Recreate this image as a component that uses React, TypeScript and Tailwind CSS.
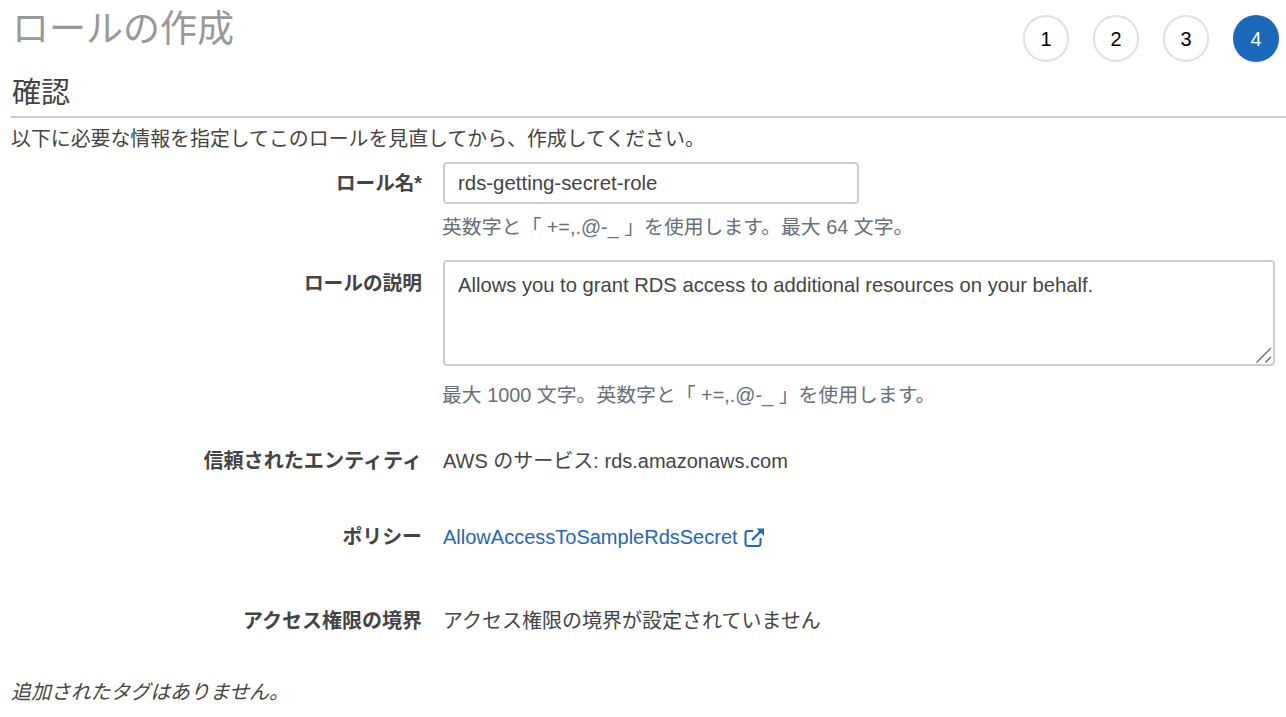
const FONT = "font-['Liberation_Sans','Noto_Sans_CJK_JP',sans-serif]";

const STEPS = [1, 2, 3, 4];

function Label({ children }: { children: React.ReactNode }) {
  return <div className="w-[422px] shrink-0 text-right font-bold text-[#444]">{children}</div>;
}

function ExternalIcon() {
  return (
    <svg width="21" height="20" viewBox="0 0 21 20" fill="none" className="shrink-0">
      <path d="M9 4H4a2.5 2.5 0 0 0-2.5 2.5v10A2.5 2.5 0 0 0 4 19h10a2.5 2.5 0 0 0 2.5-2.5V11" stroke="#1a69bb" strokeWidth="2" />
      <path d="M8 13l9-9" stroke="#1a69bb" strokeWidth="2.4" />
      <path d="M12.5 1.5H20V9z" fill="#1a69bb" />
    </svg>
  );
}

export default function App() {
  return (
    <div className={`${FONT} h-[717px] overflow-hidden bg-white pl-3 text-[19.9px] leading-[28px] text-[#444]`}>
      <div className="flex items-start justify-between pr-[7px]">
        <h1 className="mt-[9px] text-[37px] leading-[42px] text-[#999]">ロールの作成</h1>
        <div className="mt-[15px] flex gap-6">
          {STEPS.map((n) => (
            <div
              key={n}
              className={
                n === 4
                  ? "flex h-[47px] w-[46px] items-center justify-center rounded-full bg-[#1a69bb] text-white"
                  : "flex h-[47px] w-[46px] items-center justify-center rounded-full border-2 border-[#e1e1e1] text-black"
              }
            >
              {n}
            </div>
          ))}
        </div>
      </div>
      <h2 className="-ml-px mt-[13px] border-b-2 border-[#ccc] pb-[5px] pl-px text-[29px] leading-[36px] text-[#444]">確認</h2>
      <p className="-ml-px mt-[7px]">以下に必要な情報を指定してこのロールを見直してから、作成してください。</p>
      <div className="-ml-3 mt-[9px] flex flex-col">
        <div className="flex gap-[21px]">
          <div className="pt-[7px] text-[19.6px]">
            <Label>ロール名*</Label>
          </div>
          <div>
            <input
              readOnly
              value="rds-getting-secret-role"
              className="block h-[42px] w-[416px] rounded border-2 border-[#ccc] px-[13px] text-[20.4px] text-[#444] outline-none"
            />
            <p className="-ml-px mt-[9px] text-[19.85px] text-[#687078]">英数字と「 +=,.@-_ 」を使用します。最大 64 文字。</p>
          </div>
        </div>
        <div className="mt-[19px] flex gap-[21px]">
          <div className="pt-[9px] text-[19.7px]">
            <Label>ロールの説明</Label>
          </div>
          <div>
            <div className="relative">
              <textarea
                readOnly
                value="Allows you to grant RDS access to additional resources on your behalf."
                className="block h-[106px] w-[832px] resize-none rounded border-2 border-[#ccc] px-[13px] py-[9px] text-[20.2px] text-[#444] outline-none"
              />
              <svg width="16" height="16" viewBox="0 0 16 16" fill="none" className="absolute bottom-[3px] right-[3px]">
                <path d="M.5 15.5L15 1M9.5 15.5L15 9.8" stroke="#666" strokeWidth="1.3" />
              </svg>
            </div>
            <p className="-ml-px mt-[15px] text-[19.85px] text-[#687078]">最大 1000 文字。英数字と「 +=,.@-_ 」を使用します。</p>
          </div>
        </div>
        <div className="mt-[38px] flex gap-[21px]">
          <div className="text-[20.1px]">
            <Label>信頼されたエンティティ</Label>
          </div>
          <div className="text-[20px]">AWS のサービス: rds.amazonaws.com</div>
        </div>
        <div className="mt-[48px] flex gap-[21px]">
          <Label>ポリシー</Label>
          <a className="flex items-center gap-[6px] text-[20px] text-[#1a69bb]">
            AllowAccessToSampleRdsSecret
            <ExternalIcon />
          </a>
        </div>
        <div className="mt-[56px] flex gap-[21px] text-[20px]">
          <Label>アクセス権限の境界</Label>
          <div>アクセス権限の境界が設定されていません</div>
        </div>
      </div>
      <p className="-ml-px mt-[43px] italic">追加されたタグはありません。</p>
    </div>
  );
}
